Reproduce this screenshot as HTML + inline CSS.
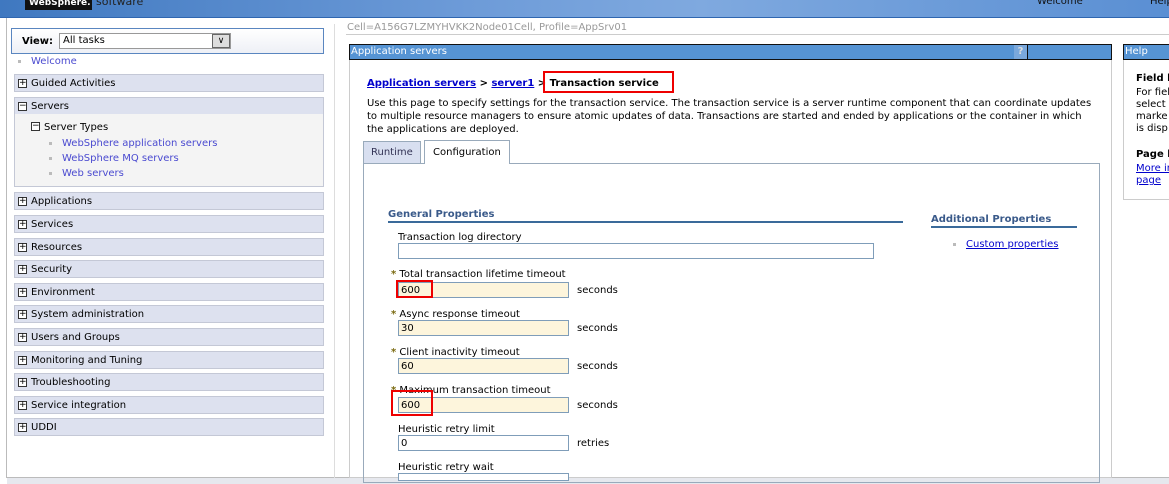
<!DOCTYPE html>
<html><head><style>
*{margin:0;padding:0;box-sizing:border-box}
body{width:1169px;height:484px;overflow:hidden;background:#fff;font-family:"DejaVu Sans","Liberation Sans",sans-serif;font-size:10px;line-height:15px;color:#000;position:relative}
.a{position:absolute;white-space:nowrap}
.hdr{left:0;top:0;width:1169px;height:18px;background:linear-gradient(90deg,#3f78c0,#6d9bd8 40%,#7fa9df 60%,#5a8fd3);border-bottom:1px solid #2f66b0}
.nav{left:14px;width:310px;height:18px;background:#dde1ef;border:1px solid #c4c8d6;padding:1px 0 0 16px}
.pm{position:absolute;left:3px;top:4px;width:9px;height:9px;border:1px solid #333;background:#fff;font-size:9px;line-height:7px;text-align:center}
.lnk{color:#4a4ad0}
.bul{position:absolute;width:3px;height:3px;background:#bbb}
.inp{position:absolute;height:16px;border:1px solid #7f9db9;background:#fdf5dc;font-size:10px;padding:0 2px;line-height:15px}
.star{color:#7a6a10;font-weight:bold}
.red{position:absolute;border:2px solid #e00}
</style></head><body>
<div class="a hdr"></div>
<div class="a" style="left:25px;top:0;width:67px;height:10px;background:#111;color:#fff;font-weight:bold;font-size:9px;line-height:6px;padding-left:4px">WebSphere.</div>
<div class="a" style="left:96px;top:-6px;font-size:11px;color:#222">software</div>
<div class="a" style="left:1037px;top:-6px;font-size:10px;color:#111">Welcome</div>
<div class="a" style="left:1150px;top:-6px;font-size:10px;color:#111">Help</div>
<div class="a" style="left:6px;top:18px;width:1px;height:460px;background:#bbb"></div>
<div class="a" style="left:6px;top:477px;width:1163px;height:1px;background:#bbb"></div>
<div class="a" style="left:7px;top:478px;width:1162px;height:6px;background:#e6e8ee"></div>
<div class="a" style="left:334px;top:24px;width:1px;height:454px;background:#ddd"></div>
<div class="a" style="left:346px;top:34px;width:823px;height:1px;background:#ccc"></div>
<div class="a" style="left:11px;top:28px;width:313px;height:26px;border:1px solid #5a86c0;background:linear-gradient(#fff,#eef0f6)"></div>
<div class="a" style="left:22px;top:34px;font-weight:bold">View:</div>
<div class="a" style="left:59px;top:33px;width:172px;height:16px;border:1px solid #999;background:#fff;padding:0 3px;line-height:14px">All tasks</div>
<div class="a" style="left:212px;top:34px;width:18px;height:14px;border:1px solid #666;background:#ddd;text-align:center;font-size:9px;line-height:12px">&#8744;</div>
<div class="bul" style="left:18px;top:60px"></div><div class="a lnk" style="left:31px;top:54px">Welcome</div>
<div class="a nav" style="top:74px"><span class="pm">+</span>Guided Activities</div>
<div class="a nav" style="top:97px"><span class="pm">−</span>Servers</div>
<div class="a" style="left:14px;top:114px;width:310px;height:73px;border:1px solid #c4c8d6;border-top:none;background:#f4f4f4"></div>
<div class="a" style="left:31px;top:122px;width:9px;height:9px;border:1px solid #333;background:#fff;font-size:9px;line-height:7px;text-align:center">−</div>
<div class="a" style="left:44px;top:120px">Server Types</div>
<div class="bul" style="left:49px;top:142px"></div><div class="a lnk" style="left:62px;top:136px">WebSphere application servers</div>
<div class="bul" style="left:49px;top:157px"></div><div class="a lnk" style="left:62px;top:151px">WebSphere MQ servers</div>
<div class="bul" style="left:49px;top:172px"></div><div class="a lnk" style="left:62px;top:166px">Web servers</div>
<div class="a nav" style="top:192px"><span class="pm">+</span>Applications</div>
<div class="a nav" style="top:215px"><span class="pm">+</span>Services</div>
<div class="a nav" style="top:238px"><span class="pm">+</span>Resources</div>
<div class="a nav" style="top:260px"><span class="pm">+</span>Security</div>
<div class="a nav" style="top:283px"><span class="pm">+</span>Environment</div>
<div class="a nav" style="top:305px"><span class="pm">+</span>System administration</div>
<div class="a nav" style="top:328px"><span class="pm">+</span>Users and Groups</div>
<div class="a nav" style="top:351px"><span class="pm">+</span>Monitoring and Tuning</div>
<div class="a nav" style="top:373px"><span class="pm">+</span>Troubleshooting</div>
<div class="a nav" style="top:396px"><span class="pm">+</span>Service integration</div>
<div class="a nav" style="top:418px"><span class="pm">+</span>UDDI</div>

<div class="a" style="left:347px;top:20px;color:#999">Cell=A156G7LZMYHVKK2Node01Cell, Profile=AppSrv01</div>
<div class="a" style="left:349px;top:44px;width:763px;height:16px;background:#5694d4;border:1px solid #111;color:#fff;padding-left:1px;line-height:14px">Application servers</div>
<div class="a" style="left:1014px;top:45px;width:13px;height:14px;background:#7aa8dc;color:#ddd;text-align:center;font-weight:bold;line-height:14px">?</div>
<div class="a" style="left:1027px;top:44px;width:1px;height:16px;background:#111"></div>
<div class="a" style="left:349px;top:60px;width:763px;height:418px;border:1px solid #ccc;border-top:none"></div>
<div class="a" style="left:367px;top:76px;font-weight:bold"><span style="color:#00c;text-decoration:underline">Application servers</span> &gt; <span style="color:#00c;text-decoration:underline">server1</span> &gt; Transaction service</div>
<div class="a" style="left:367px;top:97px;line-height:13px;white-space:normal;width:728px">Use this page to specify settings for the transaction service. The transaction service is a server runtime component that can coordinate updates to multiple resource managers to ensure atomic updates of data. Transactions are started and ended by applications or the container in which the applications are deployed.</div>
<div class="red" style="left:543px;top:71px;width:131px;height:22px"></div>
<div class="a" style="left:363px;top:141px;width:58px;height:23px;background:#d8dff0;border:1px solid #9ab;color:#335;padding:3px 0 0 7px">Runtime</div>
<div class="a" style="left:424px;top:140px;width:86px;height:24px;background:#fff;border:1px solid #9ab;border-bottom:none;padding:4px 0 0 8px;z-index:2">Configuration</div>
<div class="a" style="left:363px;top:163px;width:737px;height:320px;border:1px solid #9ab"></div>
<div class="a" style="left:388px;top:207px;font-weight:bold;color:#3a5a8a">General Properties</div>
<div class="a" style="left:388px;top:221px;width:515px;height:2px;background:#3a6a9a"></div>
<div class="a" style="left:931px;top:212px;font-weight:bold;color:#3a5a8a">Additional Properties</div>
<div class="a" style="left:931px;top:226px;width:146px;height:2px;background:#3a6a9a"></div>
<div class="bul" style="left:953px;top:243px"></div><div class="a" style="left:966px;top:237px;color:#00c;text-decoration:underline">Custom properties</div>

<div class="a" style="left:398px;top:230px">Transaction log directory</div>
<div class="inp" style="left:398px;top:243px;width:476px;background:#fff"></div>
<div class="a" style="left:391px;top:267px"><span class="star">*</span> Total transaction lifetime timeout</div>
<div class="inp" style="left:398px;top:282px;width:171px">600</div><div class="a" style="left:577px;top:283px">seconds</div>
<div class="red" style="left:396px;top:280px;width:37px;height:18px"></div>
<div class="a" style="left:391px;top:307px"><span class="star">*</span> Async response timeout</div>
<div class="inp" style="left:398px;top:320px;width:171px">30</div><div class="a" style="left:577px;top:321px">seconds</div>
<div class="a" style="left:391px;top:345px"><span class="star">*</span> Client inactivity timeout</div>
<div class="inp" style="left:398px;top:358px;width:171px">60</div><div class="a" style="left:577px;top:359px">seconds</div>
<div class="a" style="left:391px;top:383px"><span class="star">*</span> Maximum transaction timeout</div>
<div class="inp" style="left:398px;top:397px;width:171px">600</div><div class="a" style="left:577px;top:398px">seconds</div>
<div class="red" style="left:391px;top:390px;width:42px;height:26px"></div>
<div class="a" style="left:398px;top:422px">Heuristic retry limit</div>
<div class="inp" style="left:398px;top:435px;width:171px;background:#fff">0</div><div class="a" style="left:577px;top:436px">retries</div>
<div class="a" style="left:398px;top:460px">Heuristic retry wait</div>
<div class="inp" style="left:398px;top:473px;width:171px;background:#fff;height:8px"></div>

<div class="a" style="left:1123px;top:44px;width:46px;height:16px;background:#5694d4;border:1px solid #111;border-right:none;color:#fff;padding-left:1px;line-height:14px">Help</div>
<div class="a" style="left:1123px;top:60px;width:46px;height:140px;border-left:1px solid #ccc;border-bottom:1px solid #ccc"></div>
<div class="a" style="left:1136px;top:71px;font-weight:bold">Field help</div>
<div class="a" style="left:1136px;top:87px;line-height:12px">For field<br>select<br>marke<br>is disp</div>
<div class="a" style="left:1136px;top:147px;font-weight:bold">Page help</div>
<div class="a" style="left:1136px;top:163px;line-height:12px;color:#00c;text-decoration:underline">More info<br>page</div>
</body></html>
